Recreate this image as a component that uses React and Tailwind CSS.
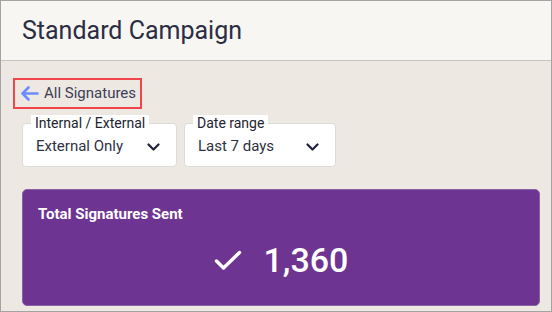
import React from "react";

function Select({ label, value, width }) {
  return (
    <div className={`relative h-[44px] ${width} bg-white border border-[#dcdcdc] rounded-[4px] flex items-center justify-between pl-[13px] pr-[16px]`}>
      <span className="absolute -top-[9px] left-[8px] px-[4px] bg-white text-[14px] leading-[17px] text-[#222430]">
        {label}
      </span>
      <span className="text-[15px] text-[#2e3144] pt-[3px]">{value}</span>
      <svg width="13" height="8" viewBox="0 0 13 8" className="mt-[3px]">
        <path d="M1.5 1.5 6.5 6.5 11.5 1.5" fill="none" stroke="#1f2238" strokeWidth="2.2" strokeLinecap="round" strokeLinejoin="round" />
      </svg>
    </div>
  );
}

export default function App() {
  return (
    <div
      className="w-[552px] h-[312px] border border-[#a3a3a3] bg-[#ede8e2] flex flex-col overflow-hidden"
      style={{ fontFamily: "Roboto, 'Liberation Sans', sans-serif" }}
    >
      <div className="h-[60px] shrink-0 bg-[#f7f6f3] border-b border-[#c4c4c4] pl-[21px] flex items-center">
        <h1 className="text-[25px] text-[#2b2d42] leading-none">Standard Campaign</h1>
      </div>

      <div className="pl-[12px] pr-[11px] pt-[17px] flex flex-col">
        <div className="w-[129px] h-[31px] border-2 border-[#f2454b] flex items-center pl-[5px] gap-[5px]">
          <svg width="19" height="15" viewBox="0 0 19 15">
            <path d="M17.5 7.5H2.5M8.5 1.5 2.5 7.5l6 6" fill="none" stroke="#6a8cff" strokeWidth="2.6" strokeLinecap="round" strokeLinejoin="round" />
          </svg>
          <span className="text-[15px] text-[#3d3e56]">All Signatures</span>
        </div>

        <div className="flex gap-[7px] mt-[14px] pl-[9px]">
          <Select label="Internal / External" value="External Only" width="w-[155px]" />
          <Select label="Date range" value="Last 7 days" width="w-[152px]" />
        </div>

        <div className="mt-[22px] ml-[9px] h-[117px] bg-[#6d3591] border border-[#8a62a6] rounded-[5px] px-[15px] pt-[14px] flex flex-col">
          <div className="text-[15px] font-bold text-white leading-[20px]">Total Signatures Sent</div>
          <div className="flex items-center justify-center gap-[22px] mt-[19px]">
            <svg width="28" height="21" viewBox="0 0 28 21">
              <path d="M2.5 11 9.5 18 25.5 2.5" fill="none" stroke="white" strokeWidth="3.4" strokeLinecap="round" strokeLinejoin="round" />
            </svg>
            <span className="text-[34px] font-medium text-white leading-none">1,360</span>
          </div>
        </div>
      </div>
    </div>
  );
}
